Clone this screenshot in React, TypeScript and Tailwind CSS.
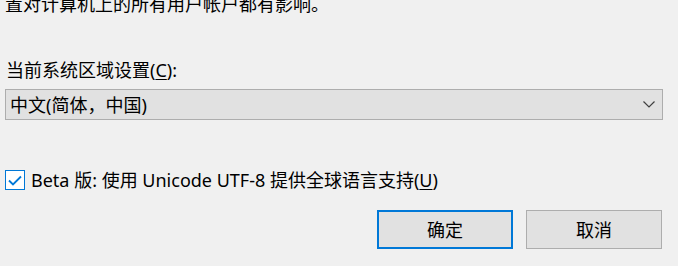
import React from 'react';

const FONT = '"Noto Sans", "Noto Sans CJK SC", sans-serif';

function Chevron() {
  return (
    <svg width="12" height="7" viewBox="0 0 12 7" className="shrink-0">
      <path d="M0.5 0.5 L6 6 L11.5 0.5" fill="none" stroke="#404040" strokeWidth="1.2" />
    </svg>
  );
}

function Check() {
  return (
    <svg width="14" height="11" viewBox="0 0 14 11">
      <path d="M1 5.5 L5 9.5 L13 1.5" fill="none" stroke="#0078d7" strokeWidth="1.8" />
    </svg>
  );
}

export default function App() {
  return (
    <div
      className="w-[678px] h-[266px] overflow-hidden bg-[#f0f0f0] text-black text-[18px] leading-[24px]"
      style={{ fontFamily: FONT }}
    >
      <p className="mt-[-8px] pl-[5px] whitespace-nowrap">置对计算机上的所有用户帐户都有影响。</p>

      <div className="mt-[42px] pl-[6px]">
        当前系统区域设置(<span className="underline underline-offset-2">C</span>):
      </div>

      <div className="mt-[7px] ml-[5px] w-[658px] h-[31px] border border-[#adadad] bg-[#e1e1e1] flex items-center justify-between pl-[4px] pr-[7px]">
        <span>中文(简体，中国)</span>
        <Chevron />
      </div>

      <div className="mt-[48px] ml-[5px] flex items-center gap-[6px]">
        <div className="w-[20px] h-[20px] border border-[#0078d7] bg-white flex items-center justify-center">
          <Check />
        </div>
        <span className="whitespace-nowrap">
          Beta 版: 使用 Unicode UTF-8 提供全球语言支持(<span className="underline underline-offset-2">U</span>)
        </span>
      </div>

      <div className="mt-[18px] flex justify-end gap-[13px] pr-[16px]">
        <button className="w-[136px] h-[39px] border-2 border-[#0078d7] bg-[#e1e1e1] flex items-center justify-center">
          确定
        </button>
        <button className="w-[136px] h-[39px] border border-[#adadad] bg-[#e1e1e1] flex items-center justify-center">
          取消
        </button>
      </div>
    </div>
  );
}
